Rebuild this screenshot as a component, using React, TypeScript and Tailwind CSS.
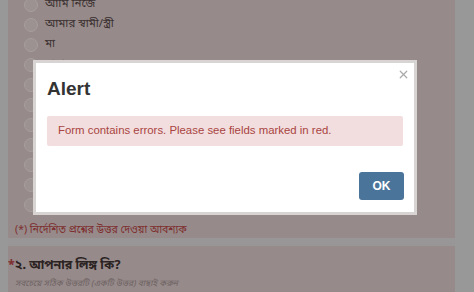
import { X } from 'lucide-react';

const options = [
  'আমি নিজে',
  'আমার স্বামী/স্ত্রী',
  'মা',
  'বাবা',
  'ছেলে',
  'মেয়ে',
  'ভাই',
  'বোন',
  'অন্যান্য আত্মীয়',
  'বন্ধু',
  'অন্যান্য',
];

const bn = { fontFamily: '"Noto Sans Bengali", "Noto Sans", "Liberation Sans", sans-serif' };

function Radio({ label }: { label: string }) {
  return (
    <div className="flex h-5 items-center gap-[7px]">
      <span className="h-[14px] w-[14px] rounded-full border border-[#a89e9e] bg-[#9d9292]" />
      <span className="text-[11.5px] text-[#3b3131]" style={bn}>
        {label}
      </span>
    </div>
  );
}

function AlertModal() {
  return (
    <div className="absolute left-[33px] top-[60px] w-[384px] border-[3px] border-[#d9d4d4] bg-white font-['Liberation_Sans',Arial,sans-serif]">
      <div className="relative px-[11px] pt-[12px]">
        <h2 className="text-[19px] font-bold leading-[28px] text-[#333]">Alert</h2>
        <button className="absolute right-[4px] top-[5px] text-[#aaa]">
          <X className="h-[13px] w-[13px]" strokeWidth={2.2} />
        </button>
      </div>
      <div className="px-[11px] pt-[13px]">
        <div className="flex h-[30px] items-center rounded-[2px] bg-[#f2dede] px-[11px] text-[11.4px] text-[#a94442]">
          Form contains errors. Please see fields marked in red.
        </div>
      </div>
      <div className="flex justify-end px-[10px] pb-[12px] pt-[26px]">
        <button className="h-[28px] w-[45px] rounded-[3px] bg-[#4b749b] text-[12px] font-bold text-white">
          OK
        </button>
      </div>
    </div>
  );
}

export default function App() {
  return (
    <div className="relative h-[292px] w-[474px] overflow-hidden bg-[#999898]">
      <div className="ml-[8px] w-[447px]">
        <div className="h-[243px] bg-[#968a8a] pl-[16px]">
          <div className="-mt-[5px]">
            {options.map((o) => (
              <Radio key={o} label={o} />
            ))}
          </div>
          <p className="mt-[8px] -ml-[9px] text-[10.5px] text-[#7e2f2f]" style={bn}>
            (*) নির্দেশিত প্রশ্নের উত্তর দেওয়া আবশ্যক
          </p>
        </div>
        <div className="h-[8px] bg-[#989696]" />
        <div className="h-[60px] bg-[#968a8a] pt-[11px]">
          <p className="text-[12.5px] font-bold text-[#2b2222]" style={bn}>
            <span className="text-[#7e2f2f]">*</span>২. আপনার লিঙ্গ কি?
          </p>
          <p className="mt-[2px] pl-[7px] text-[8.5px] italic text-[#6d6262]" style={bn}>
            সবচেয়ে সঠিক উত্তরটি (একটি উত্তর) বাছাই করুন
          </p>
        </div>
      </div>
      <AlertModal />
    </div>
  );
}
